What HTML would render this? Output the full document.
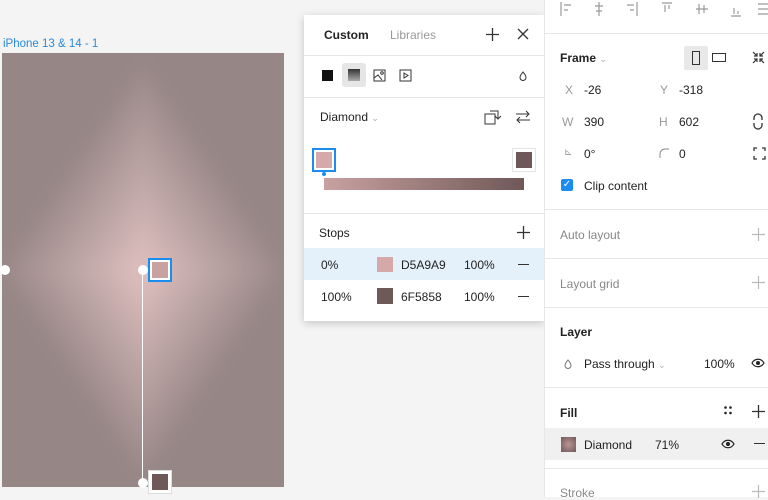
<!DOCTYPE html>
<html><head><meta charset="utf-8"><style>
*{box-sizing:border-box;margin:0;padding:0}
body{width:768px;height:497px;overflow:hidden;background:#f4f4f4;font-family:"Liberation Sans",sans-serif;font-size:12px;color:#222;position:relative}
.a{position:absolute}
.q{position:absolute;width:161px;height:237px}
.hr{position:absolute;height:1px;background:#e6e6e6}
.g{color:#999}
svg{position:absolute}
</style></head><body>
<div class="a" style="left:3px;top:38px;color:#2a8ad8;font-size:11.5px">iPhone 13 &amp; 14 - 1</div>
<div class="a" style="left:2px;top:53px;width:282px;height:434px;background:#fff;overflow:hidden">
 <div style="opacity:.72;position:absolute;left:-20px;top:-20px;width:322px;height:474px;filter:blur(8px)">
 <div class="q" style="left:0;top:0;background:linear-gradient(to top left,#D5A9A9 0%,#6F5858 46%,#6F5858 100%)"></div>
 <div class="q" style="left:161px;top:0;background:linear-gradient(to top right,#D5A9A9 0%,#6F5858 46%,#6F5858 100%)"></div>
 <div class="q" style="left:0;top:237px;background:linear-gradient(to bottom left,#D5A9A9 0%,#6F5858 46%,#6F5858 100%)"></div>
 <div class="q" style="left:161px;top:237px;background:linear-gradient(to bottom right,#D5A9A9 0%,#6F5858 46%,#6F5858 100%)"></div>
 </div>
</div>
<div class="a" style="left:142px;top:270px;width:1px;height:213px;background:#fff"></div>
<div class="a" style="left:0;top:265px;width:10px;height:10px;border-radius:50%;background:#fff"></div>
<div class="a" style="left:138px;top:265px;width:10px;height:10px;border-radius:50%;background:#fff"></div>
<div class="a" style="left:138px;top:478px;width:10px;height:10px;border-radius:50%;background:#fff"></div>
<div class="a" style="left:148px;top:258px;width:24px;height:24px;border:2px solid #1c8cf0;background:#fff;padding:2px"><div style="width:16px;height:16px;background:#c9a1a1"></div></div>
<div class="a" style="left:148px;top:470px;width:24px;height:24px;border:1px solid #ddd;background:#fff;padding:3px"><div style="width:16px;height:16px;background:#6F5858"></div></div>

<!-- color panel -->
<div class="a" style="left:304px;top:15px;width:240px;height:306px;background:#fff;box-shadow:0 2px 8px rgba(0,0,0,.2)">
 <div class="a" style="left:20px;top:13px;font-weight:bold;font-size:12px">Custom</div>
 <div class="a g" style="left:86px;top:13px;font-size:12px">Libraries</div>
 <svg style="left:182px;top:13px" width="13" height="13"><path d="M6.5 0V13M0 6.5H13" stroke="#333" stroke-width="1.3"/></svg>
 <svg style="left:213px;top:13px" width="12" height="12"><path d="M1 1L11 11M11 1L1 11" stroke="#333" stroke-width="1.3"/></svg>
 <div class="hr" style="left:0;top:40px;width:240px"></div>
 <div class="a" style="left:18px;top:55px;width:11px;height:11px;background:#111"></div>
 <div class="a" style="left:38px;top:48px;width:24px;height:24px;background:#e6e6e6;border-radius:3px"></div>
 <div class="a" style="left:44px;top:54px;width:12px;height:12px;background:linear-gradient(#333,#aaa)"></div>
 <svg style="left:69px;top:54px" width="13" height="13"><rect x="1" y="1" width="11" height="11" fill="none" stroke="#333"/><path d="M1 9L5 6L9 11" fill="none" stroke="#333"/><circle cx="9" cy="4" r="1.3" fill="none" stroke="#333"/></svg>
 <svg style="left:95px;top:54px" width="13" height="13"><rect x="1" y="1" width="11" height="11" fill="none" stroke="#333"/><path d="M5 4L9 6.5L5 9Z" fill="none" stroke="#333"/></svg>
 <svg style="left:214px;top:54px" width="10" height="13"><path d="M5 3C3.5 5 2 6.5 2 8.5a3 3 0 0 0 6 0C8 6.5 6.5 5 5 3Z" fill="none" stroke="#333"/></svg>
 <div class="hr" style="left:0;top:82px;width:240px"></div>
 <div class="a" style="left:16px;top:95px">Diamond <span style="color:#aaa;font-size:9px">&#8964;</span></div>
 <svg style="left:180px;top:94px" width="18" height="16"><rect x="1" y="5" width="10" height="10" fill="none" stroke="#333"/><path d="M6 2H14V9M11 7L14 10L17 7" fill="none" stroke="#333"/></svg>
 <svg style="left:210px;top:94px" width="18" height="16"><path d="M2 5H15M12 2L15 5L12 8M16 11H3M6 8L3 11L6 14" fill="none" stroke="#333"/></svg>
 <div class="a" style="left:8px;top:133px;width:24px;height:24px;border:2px solid #1c8cf0;background:#fff;padding:2px"><div style="width:16px;height:16px;background:#D5A9A9"></div></div>
 <div class="a" style="left:18px;top:157px;width:4px;height:4px;background:#1c8cf0;border-radius:50%"></div>
 <div class="a" style="left:208px;top:133px;width:24px;height:24px;border:1px solid #e5e5e5;background:#fff;padding:3px"><div style="width:16px;height:16px;background:#6F5858"></div></div>
 <div class="a" style="left:20px;top:163px;width:200px;height:12px;background:linear-gradient(90deg,#c9a1a1,#6F5858)"></div>
 <div class="hr" style="left:0;top:198px;width:240px"></div>
 <div class="a" style="left:15px;top:211px">Stops</div>
 <svg style="left:213px;top:211px" width="13" height="13"><path d="M6.5 0V13M0 6.5H13" stroke="#333" stroke-width="1.3"/></svg>
 <div class="a" style="left:0;top:233px;width:240px;height:32px;background:#e4f1fb"></div>
 <div class="a" style="left:17px;top:243px">0%</div>
 <div class="a" style="left:73px;top:242px;width:16px;height:15px;background:#D5A9A9"></div>
 <div class="a" style="left:97px;top:243px">D5A9A9</div>
 <div class="a" style="left:160px;top:243px">100%</div>
 <div class="a" style="left:214px;top:249px;width:11px;height:1.3px;background:#333"></div>
 <div class="a" style="left:17px;top:275px">100%</div>
 <div class="a" style="left:73px;top:273px;width:16px;height:16px;background:#6F5858"></div>
 <div class="a" style="left:97px;top:275px">6F5858</div>
 <div class="a" style="left:160px;top:275px">100%</div>
 <div class="a" style="left:214px;top:281px;width:11px;height:1.3px;background:#333"></div>
</div>

<!-- right panel -->
<div class="a" style="left:544px;top:0;width:224px;height:497px;background:#fff;border-left:1px solid #e6e6e6">
 <svg style="left:14px;top:0" width="210" height="18" stroke="#999" fill="none" stroke-width="1.2">
  <path d="M2 2V16M5 5H12M5 10H9"/><path d="M40 2V16M36 6H44M37 11H43"/><path d="M78 2V16M68 5H75M71 10H75"/>
  <path d="M103 3H113M106 5V12M110 5V9"/><path d="M137 9H149M140 4V14M145 5V13"/><path d="M172 16H182M175 8V14M179 11V14"/><path d="M199 4H210M199 9H210M199 14H210"/>
 </svg>
 <div class="hr" style="left:0;top:33px;width:224px"></div>
 <div class="a" style="left:15px;top:51px;font-weight:bold">Frame <span style="color:#aaa;font-size:9px;font-weight:normal">&#8964;</span></div>
 <div class="a" style="left:139px;top:46px;width:24px;height:24px;background:#e8e8e8;border-radius:2px"></div>
 <div class="a" style="left:147px;top:51px;width:8px;height:14px;border:1.3px solid #333"></div>
 <div class="a" style="left:167px;top:53px;width:14px;height:9px;border:1.3px solid #333"></div>
 <svg style="left:207px;top:51px" width="13" height="13" stroke="#333" fill="none" stroke-width="1.2"><path d="M1 1L5 5M5 2V5H2M12 1L8 5M8 2V5H11M1 12L5 8M5 11V8H2M12 12L8 8M8 11V8H11"/></svg>
 <div class="a g" style="left:20px;top:83px">X</div><div class="a" style="left:39px;top:83px">-26</div>
 <div class="a g" style="left:115px;top:83px">Y</div><div class="a" style="left:134px;top:83px">-318</div>
 <div class="a g" style="left:17px;top:115px">W</div><div class="a" style="left:39px;top:115px">390</div>
 <div class="a g" style="left:114px;top:115px">H</div><div class="a" style="left:134px;top:115px">602</div>
 <svg style="left:208px;top:113px" width="10" height="17" stroke="#333" fill="none" stroke-width="1.3"><path d="M1 7V5a4 4 0 0 1 8 0V7M1 10V12a4 4 0 0 0 8 0V10"/></svg>
 <div class="a g" style="left:19px;top:147px;font-size:10px">⊾</div><div class="a" style="left:39px;top:147px">0°</div>
 <svg style="left:114px;top:148px" width="10" height="10" stroke="#888" fill="none"><path d="M1 10V6a5 5 0 0 1 5-5H10"/></svg><div class="a" style="left:134px;top:147px">0</div>
 <svg style="left:208px;top:147px" width="13" height="13" stroke="#333" fill="none" stroke-width="1.3"><path d="M1 4V1H4M9 1H12V4M12 9V12H9M4 12H1V9"/></svg>
 <div class="a" style="left:16px;top:179px;width:12px;height:12px;background:#1c8cf0;border-radius:2px;color:#fff;font-size:10px;line-height:12px;text-align:center">✓</div>
 <div class="a" style="left:39px;top:179px">Clip content</div>
 <div class="hr" style="left:0;top:209px;width:224px"></div>
 <div class="a g" style="left:15px;top:228px;color:#888">Auto layout</div>
 <svg style="left:207px;top:228px" width="13" height="13"><path d="M6.5 0V13M0 6.5H13" stroke="#bbb" stroke-width="1.2"/></svg>
 <div class="hr" style="left:0;top:258px;width:224px"></div>
 <div class="a" style="left:15px;top:277px;color:#888">Layout grid</div>
 <svg style="left:207px;top:276px" width="13" height="13"><path d="M6.5 0V13M0 6.5H13" stroke="#bbb" stroke-width="1.2"/></svg>
 <div class="hr" style="left:0;top:307px;width:224px"></div>
 <div class="a" style="left:15px;top:325px;font-weight:bold">Layer</div>
 <svg style="left:18px;top:357px" width="10" height="13"><path d="M5 3C3.5 5 2 6.5 2 8.5a3 3 0 0 0 6 0C8 6.5 6.5 5 5 3Z" fill="none" stroke="#777"/></svg>
 <div class="a" style="left:39px;top:357px">Pass through <span style="color:#aaa;font-size:9px">&#8964;</span></div>
 <div class="a" style="left:159px;top:357px">100%</div>
 <svg style="left:206px;top:357px" width="14" height="12"><path d="M1 6C4 1 10 1 13 6C10 11 4 11 1 6Z" fill="none" stroke="#222" stroke-width="1.2"/><circle cx="7" cy="6" r="2" fill="#222"/></svg>
 <div class="hr" style="left:0;top:387px;width:224px"></div>
 <div class="a" style="left:15px;top:406px;font-weight:bold">Fill</div>
 <svg style="left:179px;top:406px" width="8" height="9" fill="#222"><circle cx="1.5" cy="1.5" r="1.3"/><circle cx="6.5" cy="1.5" r="1.3"/><circle cx="1.5" cy="7" r="1.3"/><circle cx="6.5" cy="7" r="1.3"/></svg>
 <svg style="left:207px;top:405px" width="13" height="13"><path d="M6.5 0V13M0 6.5H13" stroke="#333" stroke-width="1.3"/></svg>
 <div class="a" style="left:0;top:428px;width:224px;height:32px;background:#f0f0f0"></div>
 <div class="a" style="left:16px;top:437px;width:15px;height:15px;background:radial-gradient(#b99595,#6F5858)"></div>
 <div class="a" style="left:39px;top:438px">Diamond</div>
 <div class="a" style="left:110px;top:438px">71%</div>
 <svg style="left:176px;top:438px" width="14" height="12"><path d="M1 6C4 1 10 1 13 6C10 11 4 11 1 6Z" fill="none" stroke="#222" stroke-width="1.2"/><circle cx="7" cy="6" r="2" fill="#222"/></svg>
 <div class="a" style="left:209px;top:443px;width:11px;height:1.3px;background:#333"></div>
 <div class="hr" style="left:0;top:468px;width:224px"></div>
 <div class="a" style="left:15px;top:486px;color:#888">Stroke</div>
 <svg style="left:207px;top:485px" width="13" height="13"><path d="M6.5 0V13M0 6.5H13" stroke="#bbb" stroke-width="1.2"/></svg>
</div>
</body></html>
